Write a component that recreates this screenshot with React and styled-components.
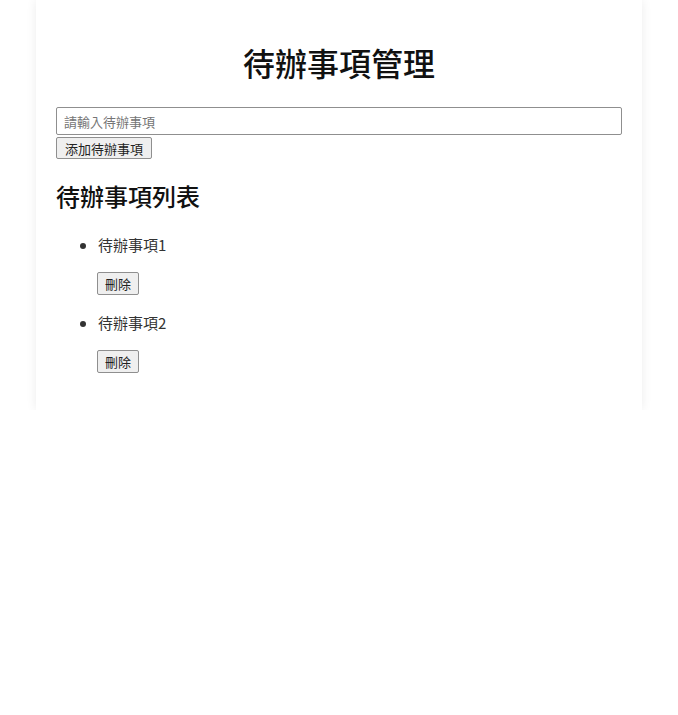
import React, { useState } from "react";
import styled, { createGlobalStyle } from "styled-components";

const GlobalStyle = createGlobalStyle`
    body {
        margin: 0;
        background: #fff;
        font-family: "Noto Sans CJK TC", "Noto Sans", sans-serif;
    }
`;

const App = () => {
    const [todos, setTodos] = useState(["待辦事項1", "待辦事項2"]);
    const [text, setText] = useState("");

    const addTodo = () => {
        if (!text.trim()) return;
        setTodos([...todos, text]);
        setText("");
    };

    const removeTodo = (index) => {
        setTodos(todos.filter((_, i) => i !== index));
    };

    return (
        <Card>
            <GlobalStyle />
            <Title>待辦事項管理</Title>
            <TodoInput
                placeholder="請輸入待辦事項"
                value={text}
                onChange={(e) => setText(e.target.value)}
            />
            <PlainButton onClick={addTodo}>添加待辦事項</PlainButton>
            <ListTitle>待辦事項列表</ListTitle>
            <TodoList>
                {todos.map((todo, i) => (
                    <TodoItem key={i}>
                        <TodoText>{todo}</TodoText>
                        <DeleteButton onClick={() => removeTodo(i)}>
                            刪除
                        </DeleteButton>
                    </TodoItem>
                ))}
            </TodoList>
        </Card>
    );
};

export default App;

const Card = styled.div`
    width: 566px;
    margin: 0 auto;
    padding: 44px 20px 20px;
    background: #fff;
    box-shadow: 0 0 10px rgba(0, 0, 0, 0.08);
`;

const Title = styled.h1`
    margin: 0 0 26px;
    font-size: 32px;
    line-height: 37px;
    font-weight: 500;
    text-align: center;
    color: #111;
`;

const TodoInput = styled.input`
    display: block;
    box-sizing: border-box;
    width: 100%;
    height: 28px;
    margin: 0 0 2px;
    padding: 0 7px;
    border: 1px solid #8f8f8f;
    border-radius: 2px;
    font-family: inherit;
    font-size: 13px;
    &::placeholder {
        color: #757575;
    }
`;

const PlainButton = styled.button`
    display: block;
    height: 22px;
    padding: 0 8px;
    border: 1px solid #8f8f8f;
    border-radius: 2px;
    background: #efefef;
    font-family: inherit;
    font-size: 13px;
    color: #222;
`;

const ListTitle = styled.h2`
    margin: 22px 0 24px;
    font-size: 24px;
    line-height: 29px;
    font-weight: 500;
    color: #111;
`;

const TodoList = styled.ul`
    margin: 0;
    padding-left: 42px;
`;

const TodoItem = styled.li`
    font-size: 15px;
    line-height: 22px;
    color: #333;
`;

const TodoText = styled.span``;

const DeleteButton = styled(PlainButton)`
    height: 23px;
    padding: 0 7px;
    margin: 16px 0 17px -1px;
`;
